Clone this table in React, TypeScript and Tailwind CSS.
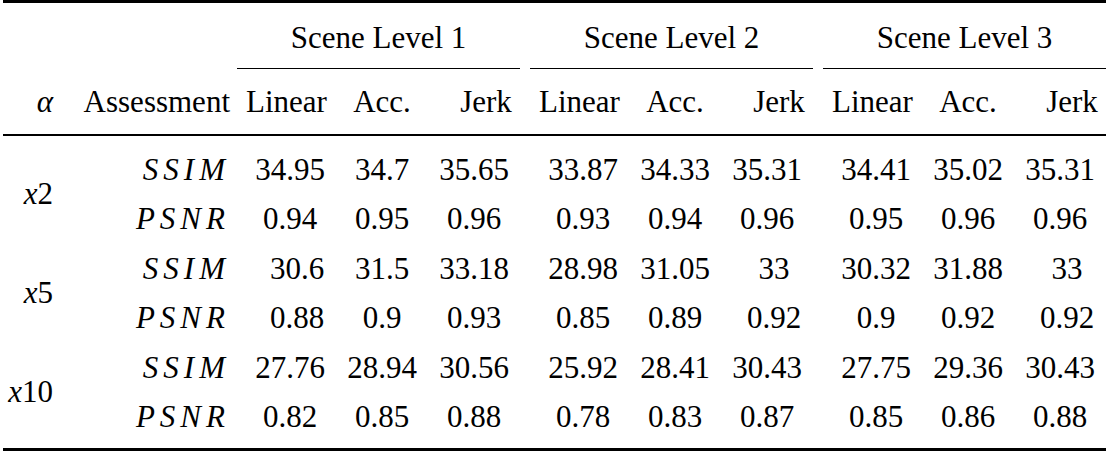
import React from "react";

type Row = { label: string; vals: string[][]; shift?: boolean[][] };
type Group = { alpha: string; rows: Row[] };

const data: Group[] = [
  {
    alpha: "2",
    rows: [
      { label: "SSIM", vals: [["34.95", "34.7", "35.65"], ["33.87", "34.33", "35.31"], ["34.41", "35.02", "35.31"]] },
      { label: "PSNR", vals: [["0.94", "0.95", "0.96"], ["0.93", "0.94", "0.96"], ["0.95", "0.96", "0.96"]] },
    ],
  },
  {
    alpha: "5",
    rows: [
      {
        label: "SSIM",
        vals: [["30.6", "31.5", "33.18"], ["28.98", "31.05", "33"], ["30.32", "31.88", "33"]],
        shift: [[true, false, false], [false, false, true], [false, false, true]],
      },
      {
        label: "PSNR",
        vals: [["0.88", "0.9", "0.93"], ["0.85", "0.89", "0.92"], ["0.9", "0.92", "0.92"]],
        shift: [[true, false, false], [false, false, true], [false, false, true]],
      },
    ],
  },
  {
    alpha: "10",
    rows: [
      { label: "SSIM", vals: [["27.76", "28.94", "30.56"], ["25.92", "28.41", "30.43"], ["27.75", "29.36", "30.43"]] },
      { label: "PSNR", vals: [["0.82", "0.85", "0.88"], ["0.78", "0.83", "0.87"], ["0.85", "0.86", "0.88"]] },
    ],
  },
];

function Cell({ v, shift }: { v: string; shift?: boolean }) {
  return (
    <div className={shift ? "w-[92px] shrink-0 text-center pl-[14px]" : "w-[92px] shrink-0 text-center"}>
      {v}
    </div>
  );
}

function DataRow({ row }: { row: Row }) {
  return (
    <div className="flex h-[49.4px] leading-[49.4px]">
      <div className="w-[178px] shrink-0 text-right pr-[7px] italic tracking-[5px]">{row.label}</div>
      <div className="flex gap-[10px]">
        {row.vals.map((g, gi) => (
          <div key={gi} className="w-[283px] shrink-0 pl-[7px] flex">
            {g.map((v, ci) => (
              <Cell key={ci} v={v} shift={row.shift ? row.shift[gi][ci] : false} />
            ))}
          </div>
        ))}
      </div>
    </div>
  );
}

export default function App() {
  return (
    <div className="w-[1110px] h-[454px] bg-white overflow-hidden font-['Liberation_Serif','Times_New_Roman',serif] text-[31px] text-black">
      <div className="ml-[3px] w-[1103px]">
        <div className="h-[3px] bg-black" />
        {/* header row 1 */}
        <div className="flex">
          <div className="w-[234px] shrink-0" />
          <div className="flex gap-[10px]">
            {["1", "2", "3"].map((n) => (
              <div
                key={n}
                className="w-[283px] shrink-0 pt-[15px] pb-[10px] leading-[40px] text-center border-b border-black"
              >
                Scene Level {n}
              </div>
            ))}
          </div>
        </div>
        {/* header row 2 */}
        <div className="flex pt-[13px] pb-[12px] leading-[40px]">
          <div className="w-[56px] shrink-0 text-right pr-[6px] italic">α</div>
          <div className="w-[178px] shrink-0 text-right pr-[7px]">Assessment</div>
          <div className="flex gap-[10px]">
            {[0, 1, 2].map((i) => (
              <div key={i} className="w-[283px] shrink-0 pl-[7px] flex">
                <div className="w-[92px] shrink-0 text-center pr-[7px]">Linear</div>
                <div className="w-[92px] shrink-0 text-center">Acc.</div>
                <div className="w-[92px] shrink-0 text-center pl-[24px]">Jerk</div>
              </div>
            ))}
          </div>
        </div>
        <div className="h-[2px] bg-black" />
        {/* data */}
        <div className="pt-[9px] pb-[7px]">
          {data.map((g) => (
            <div key={g.alpha} className="flex">
              <div className="w-[56px] shrink-0 h-[98.8px] flex items-center justify-end pr-[6px] leading-[40px]">
                <span>
                  <span className="italic">x</span>
                  {g.alpha}
                </span>
              </div>
              <div className="flex flex-col">
                {g.rows.map((r, ri) => (
                  <DataRow key={ri} row={r} />
                ))}
              </div>
            </div>
          ))}
        </div>
        <div className="h-[3px] bg-black" />
      </div>
    </div>
  );
}
